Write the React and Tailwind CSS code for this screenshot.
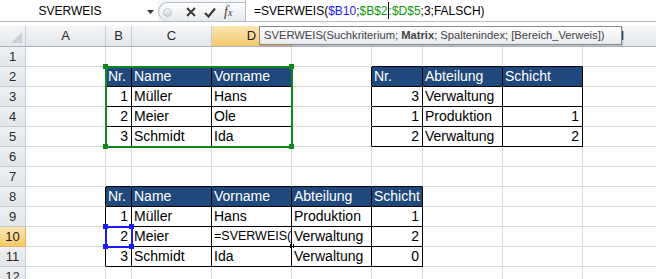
import React from 'react';

const COLS = [
  { l: 'A', w: 'w-[80px]' },
  { l: 'B', w: 'w-[26px]' },
  { l: 'C', w: 'w-[80px]' },
  { l: 'D', w: 'w-[80px]' },
  { l: 'E', w: 'w-[80px]' },
  { l: 'F', w: 'w-[51px]' },
  { l: 'G', w: 'w-[80px]' },
  { l: 'H', w: 'w-[80px]' },
  { l: 'I', w: 'w-[80px]' },
];

const TABLES = [
  { r0: 2, r1: 5, c0: 1, c1: 3 },
  { r0: 2, r1: 5, c0: 5, c1: 7 },
  { r0: 8, r1: 11, c0: 1, c1: 5 },
];

// row -> { colIndex: value }
const DATA = {
  2: { 1: 'Nr.', 2: 'Name', 3: 'Vorname', 5: 'Nr.', 6: 'Abteilung', 7: 'Schicht' },
  3: { 1: 1, 2: 'Müller', 3: 'Hans', 5: 3, 6: 'Verwaltung' },
  4: { 1: 2, 2: 'Meier', 3: 'Ole', 5: 1, 6: 'Produktion', 7: 1 },
  5: { 1: 3, 2: 'Schmidt', 3: 'Ida', 5: 2, 6: 'Verwaltung', 7: 2 },
  8: { 1: 'Nr.', 2: 'Name', 3: 'Vorname', 4: 'Abteilung', 5: 'Schicht' },
  9: { 1: 1, 2: 'Müller', 3: 'Hans', 4: 'Produktion', 5: 1 },
  10: { 1: 2, 2: 'Meier', 3: '=SVERWEIS($', 4: 'Verwaltung', 5: 2 },
  11: { 1: 3, 2: 'Schmidt', 3: 'Ida', 4: 'Verwaltung', 5: 0 },
};

const inTable = (r, c) => TABLES.some((t) => r >= t.r0 && r <= t.r1 && c >= t.c0 && c <= t.c1);
const isHead = (r, c) => TABLES.some((t) => r === t.r0 && c >= t.c0 && c <= t.c1);

const ROWS = [1, 2, 3, 4, 5, 6, 7, 8, 9, 10, 11, 12];

function FormulaBar() {
  return (
    <div className="flex h-[22px] border-b border-[#b9bec6] bg-[#f3f5f7]">
      {/* Name box */}
      <div className="relative flex w-[158px] items-center bg-white">
        <span className="w-[140px] text-center text-[12px] text-black">SVERWEIS</span>
        <svg className="absolute left-[147px] top-[10px]" width="7" height="4" viewBox="0 0 7 4">
          <path d="M0 0h7L3.5 4z" fill="#333" />
        </svg>
      </div>
      {/* Buttons */}
      <div className="mt-[2px] flex w-[87px] items-center rounded-l-full border-l border-t border-[#b4bbc4] bg-linear-to-b from-white to-[#e6e9ed]">
        <span className="ml-[4px] h-[9px] w-[9px] rounded-full border border-[#bfc4cb] bg-linear-to-b from-[#f4f5f7] to-[#cfd3d9]" />
        <svg className="ml-[14px]" width="10" height="10" viewBox="0 0 10 10">
          <path d="M1 1l8 8M9 1l-8 8" stroke="#3c3c3c" strokeWidth="2" />
        </svg>
        <svg className="ml-[8px]" width="12" height="11" viewBox="0 0 12 11">
          <path d="M1 6l3.5 3.5L11 1.5" stroke="#3c3c3c" strokeWidth="2.2" fill="none" />
        </svg>
        <span className="ml-[8px] font-['Liberation_Serif',serif] text-[14px] italic leading-none text-[#3c3c3c]">
          f<span className="text-[10px]">x</span>
        </span>
      </div>
      {/* Formula input */}
      <div className="flex flex-1 items-center border-l border-[#b9bec6] bg-white pl-[8px] text-[12px] text-black">
        <span>=SVERWEIS(</span>
        <span className="text-[#1a1aff]">$B10</span>
        <span>;</span>
        <span className="text-[#0a9a0a]">$B$2</span>
        <span className="h-[17px] w-px bg-black" />
        <span className="text-[#0a9a0a]">:$D$5</span>
        <span>;3;FALSCH)</span>
      </div>
    </div>
  );
}

function ColumnHeader() {
  return (
    <div className="flex h-[21px] border-b border-[#a9b2bd]">
      <div className="relative w-[26px] shrink-0 border-r border-[#c6ccd4] bg-linear-to-b from-[#f5f6f8] to-[#e3e6ea]">
        <svg className="absolute bottom-[3px] right-[3px]" width="11" height="11" viewBox="0 0 11 11">
          <path d="M11 0v11H0z" fill="#cdd1d7" />
        </svg>
      </div>
      {COLS.map((c) => (
        <div
          key={c.l}
          className={`${c.w} shrink-0 border-r flex items-center justify-center text-[13px] ${
            c.l === 'D'
              ? 'border-[#e3b55a] bg-linear-to-b from-[#fbe6b3] to-[#f3c86a] text-[#222]'
              : 'border-[#c6ccd4] bg-linear-to-b from-[#f5f6f8] to-[#e3e6ea] text-[#2a2a2a]'
          }`}
        >
          {c.l}
        </div>
      ))}
    </div>
  );
}

function Row({ r }) {
  const data = DATA[r] || {};
  return (
    <div className="flex h-[20px]">
      <div
        className={`w-[26px] shrink-0 border-r border-b flex items-center justify-center text-[13px] ${
          r === 10
            ? 'border-[#e3b55a] bg-linear-to-b from-[#fbe6b3] to-[#f3c86a] text-[#222]'
            : 'border-[#c6ccd4] bg-linear-to-b from-[#eef0f3] to-[#e3e6ea] text-[#2a2a2a]'
        }`}
      >
        {r}
      </div>
      {COLS.map((col, ci) => {
        const v = data[ci];
        const rBlack = inTable(r, ci) || inTable(r, ci + 1);
        const bBlack = inTable(r, ci) || inTable(r + 1, ci);
        const head = isHead(r, ci);
        const num = typeof v === 'number';
        const edit = r === 10 && ci === 3;
        return (
          <div
            key={col.l}
            className={`${col.w} h-full shrink-0 border-r border-b flex items-center overflow-hidden whitespace-nowrap ${
              rBlack ? 'border-r-black' : 'border-r-[#d9d9d9]'
            } ${bBlack ? 'border-b-black' : 'border-b-[#d9d9d9]'} ${
              head ? 'bg-[#1f497d] text-white' : 'bg-white text-black'
            } ${num ? 'justify-end pr-[3px]' : 'pl-[2px]'} ${edit ? 'text-[12.5px]' : 'text-[14px]'}`}
          >
            {v}
          </div>
        );
      })}
    </div>
  );
}

function Handle({ className }) {
  return <span className={`absolute h-[5px] w-[5px] ${className}`} />;
}

export default function App() {
  return (
    <div className="relative h-[279px] w-[656px] overflow-hidden bg-white font-['Liberation_Sans',Arial,sans-serif]">
      <FormulaBar />
      <div className="h-[4px] bg-white" />
      <ColumnHeader />
      {ROWS.map((r) => (
        <Row key={r} r={r} />
      ))}

      {/* Green range reference B2:D5 */}
      <div className="absolute left-[105px] top-[66px] h-[82px] w-[188px] border-2 border-[#13861b]" />
      <Handle className="left-[103px] top-[64px] bg-[#13861b]" />
      <Handle className="left-[289px] top-[64px] bg-[#13861b]" />
      <Handle className="left-[103px] top-[144px] bg-[#13861b]" />
      <Handle className="left-[289px] top-[144px] bg-[#13861b]" />

      {/* Blue range reference B10 */}
      <div className="absolute left-[105px] top-[226px] h-[22px] w-[28px] border-2 border-[#1a1aff]" />
      <Handle className="left-[103px] top-[224px] bg-[#1a1aff]" />
      <Handle className="left-[129px] top-[224px] bg-[#1a1aff]" />
      <Handle className="left-[103px] top-[244px] bg-[#1a1aff]" />
      <Handle className="left-[129px] top-[244px] bg-[#1a1aff]" />

      {/* Edit marker D10 */}
      <span className="absolute left-[290px] top-[244px] h-[4px] w-[4px] border border-dotted border-black" />

      {/* Function tooltip */}
      <div className="absolute left-[259px] top-[26px] h-[19px] w-[363px] overflow-hidden whitespace-nowrap border border-[#8a8a8a] bg-linear-to-b from-white to-[#e9eaf0] pl-[4px] text-[11.2px] leading-[17px] text-[#444] shadow-[1px_1px_1px_rgba(0,0,0,0.15)]">
        SVERWEIS(Suchkriterium; <b className="font-bold">Matrix</b>; Spaltenindex; [Bereich_Verweis])
      </div>
    </div>
  );
}
